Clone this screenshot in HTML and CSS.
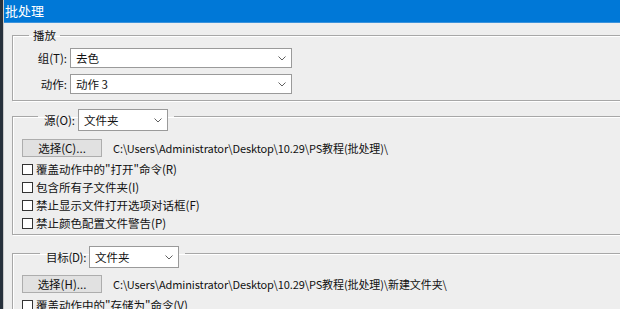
FILE: index.html
```html
<!DOCTYPE html>
<html lang="zh-CN">
<head>
<meta charset="UTF-8">
<title>批处理</title>
<link rel="stylesheet" href="styles.css">
</head>
<body>
<div class="window">
    <div class="titlebar">批处理</div>
    <div class="content">
        <fieldset class="group play">
            <legend class="caption">播放</legend>
            <div class="row">
                <span class="label">组(T):</span>
                <div class="select wide"><span>去色</span><svg width="8" height="5" viewBox="0 0 8 5"><polyline points="0.5,0.5 4,4 7.5,0.5" fill="none" stroke="#606060" stroke-width="1"/></svg></div>
            </div>
            <div class="row">
                <span class="label">动作:</span>
                <div class="select wide"><span>动作 3</span><svg width="8" height="5" viewBox="0 0 8 5"><polyline points="0.5,0.5 4,4 7.5,0.5" fill="none" stroke="#606060" stroke-width="1"/></svg></div>
            </div>
        </fieldset>

        <fieldset class="group source">
            <legend class="combo-legend">
                <span>源(O):</span>
                <div class="select narrow"><span>文件夹</span><svg width="8" height="5" viewBox="0 0 8 5"><polyline points="0.5,0.5 4,4 7.5,0.5" fill="none" stroke="#606060" stroke-width="1"/></svg></div>
            </legend>
            <div class="pick">
                <button class="btn">选择(C)...</button>
                <span class="path">C:\Users\Administrator\Desktop\10.29\PS教程(批处理)\</span>
            </div>
            <ul class="checks">
                <li><span class="box"></span>覆盖动作中的"打开"命令(R)</li>
                <li><span class="box"></span>包含所有子文件夹(I)</li>
                <li><span class="box"></span>禁止显示文件打开选项对话框(F)</li>
                <li><span class="box"></span>禁止颜色配置文件警告(P)</li>
            </ul>
        </fieldset>

        <fieldset class="group target">
            <legend class="combo-legend">
                <span>目标(D):</span>
                <div class="select narrow"><span>文件夹</span><svg width="8" height="5" viewBox="0 0 8 5"><polyline points="0.5,0.5 4,4 7.5,0.5" fill="none" stroke="#606060" stroke-width="1"/></svg></div>
            </legend>
            <div class="pick">
                <button class="btn">选择(H)...</button>
                <span class="path">C:\Users\Administrator\Desktop\10.29\PS教程(批处理)\新建文件夹\</span>
            </div>
            <ul class="checks">
                <li><span class="box"></span>覆盖动作中的"存储为"命令(V)</li>
            </ul>
        </fieldset>
    </div>
</div>
</body>
</html>
```

FILE: styles.css
```css
html,
body {
    margin: 0;
    padding: 0;
    height: 100%;
}
body {
    background: #27313c;
    font: 11px/16px "Noto Sans CJK SC", "Noto Sans", sans-serif;
    color: #111;
    overflow: hidden;
}
.window {
    margin-left: 3px;
    height: 100%;
    background: #eeeeee;
    border-left: 1px solid #c8c8c8;
    overflow: hidden;
}
.titlebar {
    height: 23px;
    line-height: 22px;
    background: #0078d7;
    color: #fff;
    font-size: 13px;
    padding-left: 1px;
    border-bottom: 1px solid #3c93dc;
    box-sizing: border-box;
}
.content {
    padding-top: 4px;
}
.group {
    margin: 0 -30px 0 8px;
    padding: 0 0 0 9px;
    border: 1px solid #a7a7a7;
    box-shadow: inset 1px 1px 0 #fff, 1px 1px 0 #fff;
    min-width: 0;
}
.caption {
    margin-left: 7px;
    padding: 0 4px;
    font-size: 11.5px;
}
.play .row {
    display: flex;
    align-items: center;
}
.play .row + .row {
    margin-top: 6px;
}
.play .row:first-of-type {
    margin-top: 5px;
}
.play {
    padding-bottom: 6px;
}
.label {
    width: 45px;
    padding-right: 3px;
    text-align: right;
    font-size: 11.5px;
}
.select {
    display: flex;
    align-items: center;
    justify-content: space-between;
    height: 20px;
    box-sizing: border-box;
    border: 1px solid #9a9a9a;
    background: #fff;
    padding: 0 5px 0 5px;
    font-size: 11.5px;
}
.select svg {
    flex: none;
}
.wide {
    width: 222px;
}
.narrow {
    width: 90px;
    height: 22px;
}
.combo-legend {
    display: flex;
    align-items: center;
    gap: 3px;
    padding: 8px 6px 0;
    font-size: 11.5px;
}
.source .combo-legend {
    margin-left: 16px;
}
.target .combo-legend {
    margin-left: 18px;
    letter-spacing: -0.3px;
}
.target .combo-legend .select {
    letter-spacing: 0;
}
.source {
    margin-top: 0;
    padding-bottom: 2px;
}
.target {
    margin-top: 3px;
}
.pick {
    display: flex;
    align-items: center;
    gap: 11px;
    margin-top: 8px;
}
.target .pick {
    margin-top: 7px;
}
.btn {
    width: 80px;
    height: 18px;
    padding: 0;
    border: 1px solid #adadad;
    background: #e1e1e1;
    font: inherit;
    font-size: 11.5px;
    line-height: 16px;
    color: #111;
}
.path {
    white-space: nowrap;
    letter-spacing: -0.1px;
}
.checks {
    list-style: none;
    margin: 3px 0 0;
    padding: 0;
}
.checks li {
    display: flex;
    align-items: center;
    height: 18px;
    font-size: 11.5px;
    white-space: nowrap;
}
.box {
    width: 11px;
    height: 11px;
    box-sizing: border-box;
    border: 1px solid #333;
    background: #fff;
    margin-right: 3px;
}
```
